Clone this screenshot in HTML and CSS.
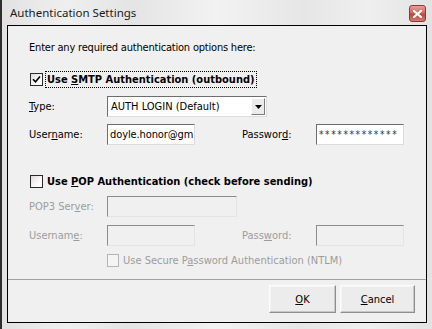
FILE: index.html
```html
<!DOCTYPE html>
<html>
<head>
<meta charset="utf-8">
<link rel="stylesheet" href="styles.css">
</head>
<body>
<div class="window">
  <div class="titlebar">
    <span class="title">Authentication Settings</span>
    <span class="close"><svg width="9" height="8" viewBox="0 0 9 8"><path d="M1 1 L8 7 M8 1 L1 7" stroke="#fff" stroke-width="2.2" stroke-linecap="square"/></svg></span>
  </div>
  <div class="client">
    <div class="main">
      <div class="intro">Enter any required authentication options here:</div>

      <div class="check-row smtp">
        <span class="cb checked"><svg width="9" height="9" viewBox="0 0 9 9"><path d="M1 4.2 L3.5 6.8 L8 1.5" fill="none" stroke="#000" stroke-width="1.6"/></svg></span>
        <span class="cb-label bold focus">Use <u>S</u>MTP Authentication (outbound)</span>
      </div>

      <div class="row r-type">
        <span class="lbl"><u>T</u>ype:</span>
        <div class="combo"><span class="combo-text">AUTH LOGIN (Default)</span><span class="combo-btn"><svg width="7" height="4" viewBox="0 0 7 4"><path d="M0 0 H7 L3.5 4 Z" fill="#000"/></svg></span></div>
      </div>

      <div class="row r-user">
        <span class="lbl">User<u>n</u>ame:</span>
        <div class="cell"><div class="input w88"><span class="clip">doyle.honor@gm</span></div></div>
        <span class="lbl">Passwor<u>d</u>:</span>
        <div class="input w88"><span class="pw">*************</span></div>
      </div>

      <div class="check-row pop">
        <span class="cb"></span>
        <span class="cb-label bold">Use <u>P</u>OP Authentication (check before sending)</span>
      </div>

      <div class="row r-server dis">
        <span class="lbl">POP3 Ser<u>v</u>er:</span>
        <div class="input disabled w130"></div>
      </div>

      <div class="row r-user2 dis">
        <span class="lbl">Usernam<u>e</u>:</span>
        <div class="cell"><div class="input disabled w88"></div></div>
        <span class="lbl">Pass<u>w</u>ord:</span>
        <div class="input disabled w88"></div>
      </div>

      <div class="check-row ntlm dis">
        <span class="cb disabled-cb"></span>
        <span class="cb-label">Use Secure P<u>a</u>ssword Authentication (NTLM)</span>
      </div>
    </div>
    <div class="footer">
      <button class="btn ok"><u>O</u>K</button>
      <button class="btn cancel"><u>C</u>ancel</button>
    </div>
  </div>
</div>
</body>
</html>
```

FILE: styles.css
```css
html, body {
  margin: 0;
  padding: 0;
}
body {
  width: 432px;
  height: 329px;
  overflow: hidden;
  background: #2e2e2e;
}
.window {
  margin-left: 2px;
  width: 430px;
  height: 329px;
  background: linear-gradient(90deg, #e2e2e2 0%, #efefef 15%, #e4e4e4 30%, #f2f2f2 50%, #e6e6e6 70%, #efefef 85%, #e3e3e3 100%);
  display: flex;
  flex-direction: column;
}
.titlebar {
  height: 25px;
  display: flex;
  align-items: flex-start;
  justify-content: space-between;
  padding: 0 6px 0 8px;
}
.title {
  font-family: "Noto Sans", "Open Sans", sans-serif;
  font-size: 11.5px;
  color: #1a1a1a;
  margin-top: 5px;
  line-height: 16px;
}
.close {
  margin-top: 5px;
  width: 17px;
  height: 17px;
  box-sizing: border-box;
  border: 1px solid #8a3a36;
  border-radius: 3px;
  background: linear-gradient(180deg, #e3a09a 0%, #cf6a61 45%, #bd463c 55%, #d27b72 100%);
  display: flex;
  align-items: center;
  justify-content: center;
}
.client {
  margin: 0 5px;
  width: 420px;
  height: 298px;
  box-sizing: border-box;
  border: 1px solid #000;
  background: #f0f0f0;
  display: flex;
  flex-direction: column;
  font-family: "DejaVu Sans Condensed", "DejaVu Sans", sans-serif;
  font-size: 11px;
  color: #000;
}
.main {
  padding: 0 0 0 21px;
  height: 253px;
  border-bottom: 1px solid #a0a0a0;
  display: flex;
  flex-direction: column;
}
.intro {
  margin-top: 15px;
  height: 13px;
  line-height: 13px;
  letter-spacing: -0.2px;
}
.check-row {
  display: flex;
  align-items: center;
}
.smtp { margin-top: 17px; height: 17px; margin-left: 1px; }
.pop { margin-top: 27px; height: 18px; margin-left: 1px; }
.ntlm { margin-top: 7px; height: 15px; margin-left: 78px; }
.cb {
  width: 13px;
  height: 13px;
  box-sizing: border-box;
  border: 1px solid #2a2a2a;
  background: linear-gradient(135deg, #dcdcdc 0%, #fafafa 60%, #ffffff 100%);
  display: flex;
  align-items: center;
  justify-content: center;
}
.cb.disabled-cb {
  border-color: #b5b5b5;
  background: #f4f4f4;
  width: 12px;
  height: 13px;
}
.cb-label {
  margin-left: 3px;
  padding: 1px 1px;
  line-height: 13px;
}
.bold { font-weight: bold; }
.focus { outline: 1px dotted #000; }
.dis { color: #9c9c9c; }
.row {
  display: flex;
  align-items: center;
}
.lbl {
  width: 78px;
  flex: none;
}
.cell {
  width: 135px;
  flex: none;
}
.row .cell + .lbl { width: 74px; }
.r-type { margin-top: 8px; height: 21px; }
.r-user { margin-top: 6px; height: 22px; }
.r-server { margin-top: 6px; height: 21px; }
.r-user2 { margin-top: 8px; height: 21px; }
.combo {
  width: 160px;
  height: 21px;
  box-sizing: border-box;
  border: 1px solid;
  border-color: #6e6e6e #dcdcdc #dcdcdc #6e6e6e;
  background: #fff;
  display: flex;
  align-items: center;
  justify-content: space-between;
  padding-left: 3px;
}
.combo-text { line-height: 13px; }
.combo-btn {
  width: 14px;
  height: 17px;
  box-sizing: border-box;
  margin-right: 1px;
  border: 1px solid;
  border-color: #fff #7a7a7a #7a7a7a #fff;
  background: #ececec;
  display: flex;
  align-items: center;
  justify-content: center;
}
.input {
  height: 21px;
  box-sizing: border-box;
  border: 1px solid;
  border-color: #6e6e6e #dcdcdc #dcdcdc #6e6e6e;
  background: #fff;
  display: flex;
  align-items: center;
  padding-left: 2px;
  overflow: hidden;
  white-space: nowrap;
}
.input.disabled {
  background: #f0f0f0;
  border-color: #8c8c8c #e4e4e4 #e4e4e4 #8c8c8c;
}
.w88 { width: 88px; }
.w130 { width: 130px; }
.clip { line-height: 13px; letter-spacing: -0.1px; }
.pw { font-size: 10px; letter-spacing: 1.6px; line-height: 13px; color: #333; }
.footer {
  display: flex;
  justify-content: flex-end;
  padding: 5px 11px 0 0;
  gap: 4px;
}
.btn {
  height: 28px;
  box-sizing: border-box;
  border: 1px solid;
  border-color: #fdfdfd #8e8e8e #8e8e8e #fdfdfd;
  box-shadow: inset -1px -1px 0 #c8c8c8, inset 1px 1px 0 #f4f4f4;
  background: #ececec;
  font-family: "DejaVu Sans Condensed", "DejaVu Sans", sans-serif;
  font-size: 11px;
  color: #000;
  padding: 0;
}
.ok { width: 67px; }
.cancel { width: 75px; }
u { text-decoration: underline; text-underline-offset: 1px; }
```
